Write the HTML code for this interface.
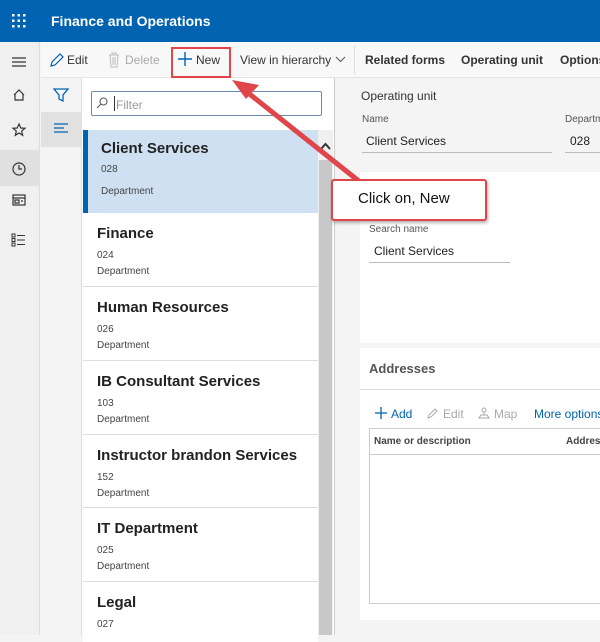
<!DOCTYPE html>
<html><head><style>
*{margin:0;padding:0;box-sizing:border-box}
body{width:600px;height:635px;overflow:hidden;position:relative;font-family:"Liberation Sans",sans-serif;background:#f4f4f4;color:#222}
.a{position:absolute}
.t{position:absolute;white-space:nowrap}
.item{position:absolute;left:83px;width:235px;background:#fff;border-bottom:1px solid #ddd}
.item b{position:absolute;left:14px;top:12px;font-size:15px;font-weight:bold;color:#222}
.item .n{position:absolute;left:14px;top:37px;font-size:10px;color:#444}
.item .d{position:absolute;left:14px;top:53px;font-size:10px;color:#444}
</style></head><body>
<!-- top bar -->
<div class="a" style="left:0;top:0;width:600px;height:42px;background:#0063b1"></div>
<svg class="a" style="left:11px;top:13px" width="16" height="16"><g fill="#fff">
<rect x="1" y="1" width="2.5" height="2.5"/><rect x="6.5" y="1" width="2.5" height="2.5"/><rect x="12" y="1" width="2.5" height="2.5"/>
<rect x="1" y="6.5" width="2.5" height="2.5"/><rect x="6.5" y="6.5" width="2.5" height="2.5"/><rect x="12" y="6.5" width="2.5" height="2.5"/>
<rect x="1" y="12" width="2.5" height="2.5"/><rect x="6.5" y="12" width="2.5" height="2.5"/><rect x="12" y="12" width="2.5" height="2.5"/></g></svg>
<div class="t" style="left:51px;top:13px;color:#fff;font-size:14px;font-weight:bold">Finance and Operations</div>
<!-- left nav -->
<div class="a" style="left:0;top:42px;width:40px;height:593px;background:#f0f0f0;border-right:1px solid #ddd"></div>
<div class="a" style="left:0;top:150px;width:40px;height:36px;background:#e0e0e0"></div>
<svg class="a" style="left:10px;top:52px" width="20" height="160" fill="none" stroke="#333" stroke-width="1.2">
<path d="M2 6h14M2 10h14M2 14h14"/>
<path d="M4 43l5-5 5 5M5 42v6h8v-6"/>
<path d="M9 72l1.8 4 4.2.3-3.3 2.8 1 4.2L9 81l-3.7 2.3 1-4.2L3 76.3l4.2-.3z"/>
<circle cx="9" cy="117" r="6"/><path d="M9 113v4h3"/>
<rect x="3" y="143" width="12" height="10"/><path d="M3 146h12M5 148h4v3H5zM11 149h2"/>
</svg>
<svg class="a" style="left:11px;top:233px" width="16" height="14" fill="none" stroke="#333" stroke-width="1"><rect x="1" y="1" width="3" height="3"/><rect x="1" y="5.5" width="3" height="3"/><rect x="1" y="10" width="3" height="3"/><path d="M6 2.5h8M6 7h8M6 11.5h8"/></svg>
<!-- toolbar -->
<div class="a" style="left:41px;top:42px;width:559px;height:36px;background:#f8f8f8;border-bottom:1px solid #e4e4e4"></div>
<svg class="a" style="left:49px;top:52px" width="16" height="16" fill="none" stroke="#0063b1" stroke-width="1.2"><path d="M2 14l1-4 8-8 3 3-8 8z"/></svg>
<div class="t" style="left:67px;top:53px;font-size:12px;color:#333">Edit</div>
<svg class="a" style="left:107px;top:52px" width="14" height="16" fill="none" stroke="#bbb" stroke-width="1"><path d="M2 3h10M5 3V1h4v2M3 3l1 12h6l1-12M6 5v8M8 5v8"/></svg>
<div class="t" style="left:125px;top:53px;font-size:12px;color:#aaa">Delete</div>
<svg class="a" style="left:178px;top:52px" width="14" height="14" stroke="#0063b1" stroke-width="1.4"><path d="M7 0v14M0 7h14"/></svg>
<div class="t" style="left:196px;top:53px;font-size:12px;color:#333">New</div>
<div class="a" style="left:171px;top:47px;width:60px;height:31px;border:2px solid #e0454a"></div>
<div class="t" style="left:240px;top:53px;font-size:12px;color:#333">View in hierarchy</div>
<svg class="a" style="left:335px;top:55px" width="11" height="8" fill="none" stroke="#555"><path d="M1 2l4.5 4.5L10 2"/></svg>
<div class="a" style="left:354px;top:46px;width:1px;height:28px;background:#ddd"></div>
<div class="t" style="left:365px;top:53px;font-size:12px;font-weight:bold;color:#333">Related forms</div>
<div class="t" style="left:461px;top:53px;font-size:12px;font-weight:bold;color:#333">Operating unit</div>
<div class="t" style="left:560px;top:53px;font-size:12px;font-weight:bold;color:#333">Options</div>
<!-- filter pane -->
<div class="a" style="left:41px;top:78px;width:41px;height:557px;background:#f4f4f4;border-right:1px solid #ddd"></div>
<div class="a" style="left:41px;top:112px;width:41px;height:35px;background:#e1e1e1"></div>
<svg class="a" style="left:53px;top:87px" width="16" height="16" fill="none" stroke="#0063b1" stroke-width="1.3"><path d="M1 2h14l-5 6v6l-4-2V8z"/></svg>
<svg class="a" style="left:53px;top:123px" width="16" height="10" stroke="#0063b1" stroke-width="1.2"><path d="M1 1h14M1 5h10M1 9h14"/></svg>
<!-- list -->
<div class="a" style="left:82px;top:78px;width:253px;height:557px;background:#fff;border-right:1px solid #ccc"></div>
<div class="a" style="left:91px;top:91px;width:231px;height:25px;border:1px solid #6a8bb1;border-radius:2px"></div>
<svg class="a" style="left:96px;top:97px" width="12" height="12" fill="none" stroke="#555" stroke-width="1"><circle cx="7.5" cy="4.5" r="3.5"/><path d="M5 7l-4 4"/></svg>
<div class="a" style="left:114px;top:96px;width:1px;height:15px;background:#333"></div>
<div class="t" style="left:116px;top:98px;font-size:12px;color:#999">Filter</div>
<div class="a" style="left:318px;top:130px;width:15px;height:505px;background:#f0f0f0"></div>
<div class="a" style="left:319px;top:160px;width:13px;height:475px;background:#c8c8c8"></div>
<svg class="a" style="left:319px;top:142px" width="13" height="9" fill="none" stroke="#333" stroke-width="2"><path d="M2 7l4.5-5L11 7"/></svg>
<div class="item" style="top:130px;height:83px;background:#cfe0f3;border-left:5px solid #0063b1;border-bottom:none;width:235px"><b style="left:13px;top:10px">Client Services</b><span class="n t" style="left:13px;top:34px">028</span><span class="d t" style="left:13px;top:56px">Department</span></div>
<div class="item" style="top:213px;height:74px"><b>Finance</b><span class="n t">024</span><span class="d t">Department</span></div>
<div class="item" style="top:287px;height:74px"><b>Human Resources</b><span class="n t">026</span><span class="d t">Department</span></div>
<div class="item" style="top:361px;height:74px"><b>IB Consultant Services</b><span class="n t">103</span><span class="d t">Department</span></div>
<div class="item" style="top:435px;height:73px"><b>Instructor brandon Services</b><span class="n t">152</span><span class="d t">Department</span></div>
<div class="item" style="top:508px;height:74px"><b>IT Department</b><span class="n t">025</span><span class="d t">Department</span></div>
<div class="item" style="top:582px;height:60px;border:none"><b>Legal</b><span class="n t">027</span></div>
<!-- right -->
<div class="t" style="left:361px;top:89px;font-size:12px;color:#333">Operating unit</div>
<div class="t" style="left:362px;top:114px;font-size:10px;color:#555">Name</div>
<div class="t" style="left:366px;top:134px;font-size:12px;color:#222">Client Services</div>
<div class="a" style="left:362px;top:152px;width:190px;height:1px;background:#bbb"></div>
<div class="t" style="left:565px;top:114px;font-size:10px;color:#555">Department</div>
<div class="t" style="left:570px;top:134px;font-size:12px;color:#222">028</div>
<div class="a" style="left:565px;top:152px;width:40px;height:1px;background:#bbb"></div>
<div class="a" style="left:360px;top:172px;width:240px;height:171px;background:#fff"></div>
<div class="t" style="left:369px;top:224px;font-size:10px;color:#555">Search name</div>
<div class="t" style="left:374px;top:244px;font-size:12px;color:#222">Client Services</div>
<div class="a" style="left:369px;top:262px;width:141px;height:1px;background:#bbb"></div>
<div class="a" style="left:360px;top:348px;width:240px;height:272px;background:#fff"></div>
<div class="a" style="left:360px;top:389px;width:240px;height:1px;background:#ddd"></div>
<div class="t" style="left:369px;top:361px;font-size:13px;font-weight:bold;color:#555">Addresses</div>
<svg class="a" style="left:375px;top:407px" width="12" height="12" stroke="#0063b1" stroke-width="1.3"><path d="M6 0v12M0 6h12"/></svg>
<div class="t" style="left:391px;top:407px;font-size:12px;color:#0063b1">Add</div>
<svg class="a" style="left:427px;top:407px" width="12" height="12" fill="none" stroke="#aaa"><path d="M1 11l1-3 6-6 2 2-6 6z"/></svg>
<div class="t" style="left:443px;top:407px;font-size:12px;color:#aaa">Edit</div>
<svg class="a" style="left:478px;top:407px" width="12" height="12" fill="none" stroke="#aaa"><circle cx="6" cy="3" r="2"/><path d="M6 5v3M1 11l2-3h6l2 3z"/></svg>
<div class="t" style="left:494px;top:407px;font-size:12px;color:#aaa">Map</div>
<div class="t" style="left:534px;top:407px;font-size:12px;color:#0063b1">More options</div>
<div class="a" style="left:369px;top:428px;width:240px;height:176px;border:1px solid #ccc"></div>
<div class="a" style="left:369px;top:454px;width:240px;height:1px;background:#ccc"></div>
<div class="t" style="left:374px;top:436px;font-size:10px;font-weight:bold;color:#444">Name or description</div>
<div class="t" style="left:566px;top:436px;font-size:10px;font-weight:bold;color:#444">Address</div>
<!-- arrow -->
<svg class="a" style="left:0;top:0" width="600" height="635"><path d="M360 182L247 92" stroke="#e0454a" stroke-width="5"/><path d="M232 80l27 5-13 14z" fill="#e0454a"/></svg>
<div class="a" style="left:331px;top:179px;width:156px;height:42px;background:#fff;border:2px solid #e0454a;border-radius:3px;box-shadow:1px 2px 3px rgba(0,0,0,.3)"></div>
<div class="t" style="left:358px;top:190px;font-size:15px;color:#111">Click on, New</div>
</body></html>
